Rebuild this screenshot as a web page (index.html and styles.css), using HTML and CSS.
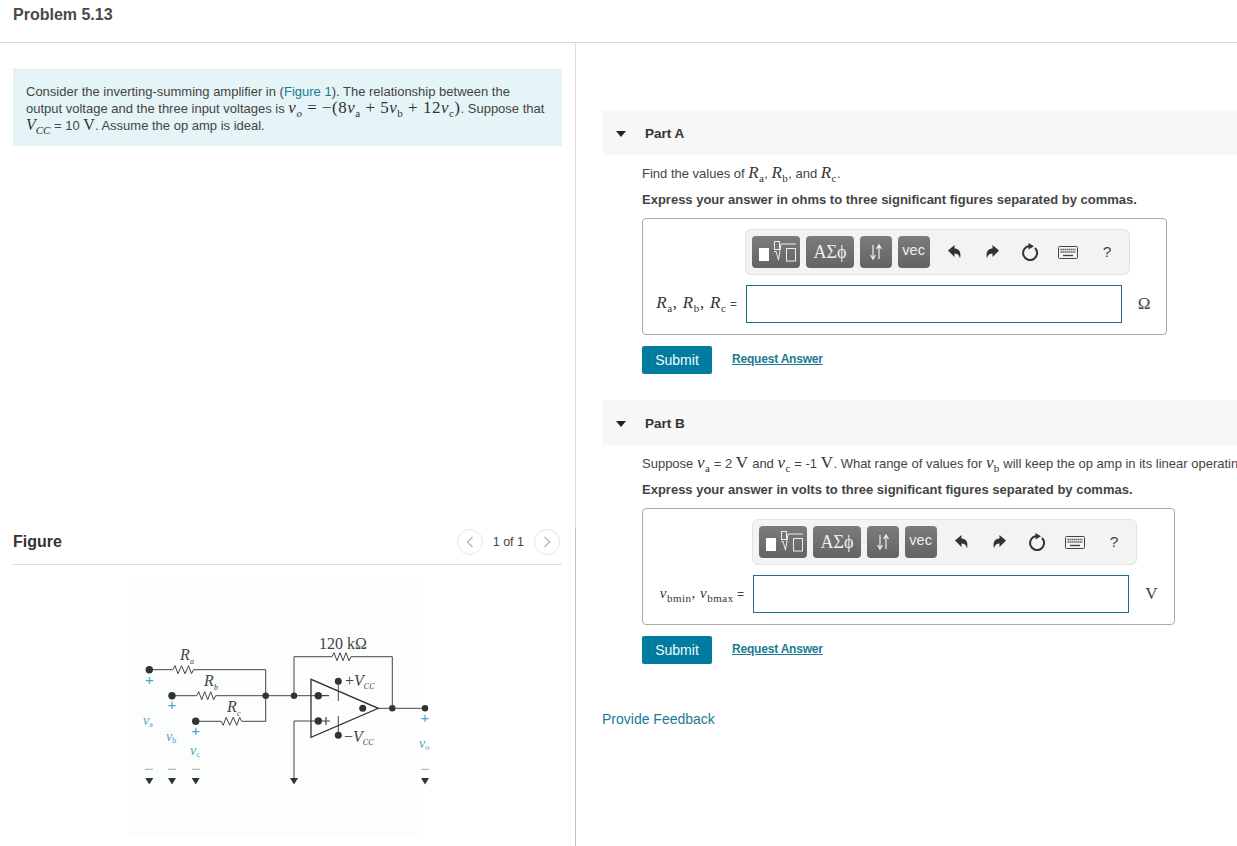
FILE: index.html
```html
<!DOCTYPE html>
<html lang="en">
<head>
    <meta charset="UTF-8">
    <title>Problem 5.13</title>
    <link rel="stylesheet" href="styles.css">
</head>
<body>
<svg class="defs" width="0" height="0">
    <symbol id="ic-templates" viewBox="0 0 48 32">
        <rect x="7" y="12" width="10" height="13" fill="#fff"/>
        <rect x="22.5" y="5.5" width="5" height="8" fill="none" stroke="#eee"/>
        <path d="M22 16l2-.8 2.5 9L29 8h14.7" fill="none" stroke="#eee"/>
        <rect x="34.5" y="12.5" width="9" height="12.5" fill="none" stroke="#eee"/>
    </symbol>
    <symbol id="ic-arrows" viewBox="0 0 16 18">
        <path d="M5 2v13M2.5 12L5 16l2.500-4M11 16V3M8.500 6L11 2l2.500 4" fill="none" stroke="#eee" stroke-width="1.200"/>
    </symbol>
    <symbol id="ic-undo" viewBox="0 0 16 16">
        <path d="M1 6.500L7.500 1v3.500c4.500 0 7 3.500 5.500 10-.7-3.500-2.500-5-5.500-5V13z" fill="#333"/>
    </symbol>
    <symbol id="ic-reset" viewBox="0 0 18 18">
        <path d="M14 5A7 7 0 1 1 8 3.100" fill="none" stroke="#333" stroke-width="2"/>
        <path d="M7.500 0l5.500 3.300-5.500 3.200z" fill="#333"/>
    </symbol>
    <symbol id="ic-keyboard" viewBox="0 0 20 13">
        <rect x=".5" y=".5" width="19" height="12" rx="1" fill="#f4f4f4" stroke="#444"/>
        <path d="M2.500 3.500h15M2.500 6h15" stroke="#444" stroke-width="1.400" stroke-dasharray="1.300 .7"/>
        <path d="M5 9.500h10" stroke="#444" stroke-width="1.400"/>
    </symbol>
</svg>

<header class="page-title">Problem 5.13</header>

<div class="main">
    <div class="left">
        <div class="statement">
            <div class="note">
                Consider the inverting-summing amplifier in (<a class="link" href="#">Figure 1</a>). The relationship between the<br>
                output voltage and the three input voltages is <span class="m eq"><i>v<sub>o</sub></i> = &minus;(8<i>v</i><sub>a</sub> + 5<i>v</i><sub>b</sub> + 12<i>v</i><sub>c</sub>)</span>. Suppose that<br>
                <span class="m"><i>V<sub>CC</sub></i></span> = 10 <span class="m">V</span>. Assume the op amp is ideal.
            </div>
        </div>

        <div class="figure">
            <div class="figure-head">
                <h2>Figure</h2>
                <div class="pager">
                    <span class="pager-btn">
                        <svg width="8" height="12" viewBox="0 0 8 12"><path d="M6.500 1L1.500 6l5 5" fill="none" stroke="#bbb" stroke-width="1.500"/></svg>
                    </span>
                    <span>1 of 1</span>
                    <span class="pager-btn">
                        <svg width="8" height="12" viewBox="0 0 8 12"><path d="M1.500 1l5 5-5 5" fill="none" stroke="#bbb" stroke-width="1.500"/></svg>
                    </span>
                </div>
            </div>
            <svg class="circuit" width="304" height="260" viewBox="128 575 304 260">
                <rect x="128" y="575" width="290" height="260" fill="#fcfdfd"/>
                <g fill="none" stroke="#444" stroke-width="1">
                    <path d="M149 668.700H173l2-4 3 8 3.500-8 3.500 8 3.500-8 3 8 2-4H265.700V720.300H241.700l-2-4-3 8-3.500-8-3.500 8-3.500-8-3 8-2-4H196"/>
                    <path d="M172 694.700H196.700l2-4 3 8 3-8 3 8 3-8 3 8 2-4H318"/>
                    <path d="M294 694.700V655.700H332l2-4 3 8 3-8 3 8 3-8 3 8 2-4H392.300V707.300"/>
                    <path d="M378 707.300H425"/>
                    <path d="M318 720H294V777"/>
                    <path d="M338.300 680V700M338.300 715V734"/>
                </g>
                <path d="M311 678.300V736.300L378.300 707.300Z" fill="none" stroke="#333" stroke-width="1.300"/>
                <g fill="#333">
                    <circle cx="149.300" cy="668.700" r="3.700"/>
                    <circle cx="172" cy="694.700" r="3.700"/>
                    <circle cx="195.700" cy="720.300" r="3.700"/>
                    <circle cx="265.700" cy="694.700" r="3.200"/>
                    <circle cx="294" cy="694.700" r="3.200"/>
                    <circle cx="318.300" cy="694.700" r="3.700"/>
                    <circle cx="318.300" cy="720" r="3.700"/>
                    <circle cx="338.300" cy="680.300" r="3.500"/>
                    <circle cx="338.300" cy="734.300" r="3.500"/>
                    <circle cx="362.700" cy="707.300" r="3.500"/>
                    <circle cx="392.300" cy="707.300" r="3.200"/>
                    <circle cx="425" cy="707.300" r="3.200"/>
                    <path d="M145.300 777h8l-4 6.500zM168 777h8l-4 6.500zM191.700 777h8l-4 6.500zM290 777h8l-4 6.500zM421 777h8l-4 6.500z"/>
                </g>
                <path d="M145 768.300h8M168 768.300h8M191.700 768.300h8M421 768.300h8" stroke="#7fb6c9" stroke-width="1"/>
                <path d="M321 694.700h8M322 720h8M326 716v8" stroke="#444" stroke-width="1.200"/>
                <text class="c-plain" x="343" y="648" text-anchor="middle">120 kΩ</text>
                <text class="c-it" x="180" y="659">R</text>
                <text class="c-it-s" x="190" y="663">a</text>
                <text class="c-it" x="204" y="685">R</text>
                <text class="c-it-s" x="214" y="689">b</text>
                <text class="c-it" x="227" y="711">R</text>
                <text class="c-it-s" x="237" y="715">c</text>
                <text class="c-plain" x="345" y="685">+<tspan class="c-it">V</tspan><tspan class="c-it-s" dy="3">CC</tspan></text>
                <text class="c-plain" x="344" y="741">&minus;<tspan class="c-it">V</tspan><tspan class="c-it-s" dy="3">CC</tspan></text>
                <g class="c-blue">
                    <text x="149.300" y="684" text-anchor="middle">+</text>
                    <text x="172" y="709" text-anchor="middle">+</text>
                    <text x="195.700" y="735" text-anchor="middle">+</text>
                    <text x="425" y="722" text-anchor="middle">+</text>
                </g>
                <g class="c-volt">
                    <text x="143" y="724"><tspan font-style="italic">v</tspan><tspan dy="2" font-size="8">a</tspan></text>
                    <text x="166" y="740"><tspan font-style="italic">v</tspan><tspan dy="2" font-size="8">b</tspan></text>
                    <text x="190" y="754"><tspan font-style="italic">v</tspan><tspan dy="2" font-size="8">c</tspan></text>
                    <text x="419" y="747"><tspan font-style="italic">v</tspan><tspan dy="2" font-size="8" font-style="italic">o</tspan></text>
                </g>
            </svg>
        </div>
    </div>

    <div class="right">
        <section class="part">
            <div class="part-head"><span class="caret"></span>Part A</div>
            <div class="part-body">
                <p class="prompt">Find the values of <span class="m"><i>R</i><sub>a</sub></span>, <span class="m"><i>R</i><sub>b</sub></span>, and <span class="m"><i>R</i><sub>c</sub></span>.</p>
                <p class="instr">Express your answer in ohms to three significant figures separated by commas.</p>
                <div class="answer">
                    <div class="toolbar">
                        <span class="tb tb-wide"><svg width="48" height="32"><use href="#ic-templates"/></svg></span>
                        <span class="tb tb-wide tb-serif">ΑΣϕ</span>
                        <span class="tb tb-small"><svg width="16" height="18"><use href="#ic-arrows"/></svg></span>
                        <span class="tb tb-small tb-vec">vec</span>
                        <span class="tool"><svg width="16" height="16"><use href="#ic-undo"/></svg></span>
                        <span class="tool"><svg class="flip" width="16" height="16"><use href="#ic-undo"/></svg></span>
                        <span class="tool"><svg width="18" height="18"><use href="#ic-reset"/></svg></span>
                        <span class="tool"><svg width="20" height="13"><use href="#ic-keyboard"/></svg></span>
                        <span class="tool tool-help">?</span>
                    </div>
                    <div class="answer-row">
                        <span class="answer-label"><span class="m"><i>R</i><sub>a</sub>, <i>R</i><sub>b</sub>, <i>R</i><sub>c</sub></span> =</span>
                        <span class="answer-input"></span>
                        <span class="unit">Ω</span>
                    </div>
                </div>
                <div class="actions">
                    <button class="submit">Submit</button>
                    <a class="request" href="#">Request Answer</a>
                </div>
            </div>
        </section>

        <section class="part part-b">
            <div class="part-head"><span class="caret"></span>Part B</div>
            <div class="part-body">
                <p class="prompt">Suppose <span class="m"><i>v</i><sub>a</sub></span> = 2 <span class="m">V</span> and <span class="m"><i>v</i><sub>c</sub></span> = -1 <span class="m">V</span>. What range of values for <span class="m"><i>v</i><sub>b</sub></span> will keep the op amp in its linear operating region?</p>
                <p class="instr">Express your answer in volts to three significant figures separated by commas.</p>
                <div class="answer answer-b">
                    <div class="toolbar">
                        <span class="tb tb-wide"><svg width="48" height="32"><use href="#ic-templates"/></svg></span>
                        <span class="tb tb-wide tb-serif">ΑΣϕ</span>
                        <span class="tb tb-small"><svg width="16" height="18"><use href="#ic-arrows"/></svg></span>
                        <span class="tb tb-small tb-vec">vec</span>
                        <span class="tool"><svg width="16" height="16"><use href="#ic-undo"/></svg></span>
                        <span class="tool"><svg class="flip" width="16" height="16"><use href="#ic-undo"/></svg></span>
                        <span class="tool"><svg width="18" height="18"><use href="#ic-reset"/></svg></span>
                        <span class="tool"><svg width="20" height="13"><use href="#ic-keyboard"/></svg></span>
                        <span class="tool tool-help">?</span>
                    </div>
                    <div class="answer-row">
                        <span class="answer-label answer-label-small"><span class="m"><i>v</i><sub>bmin</sub>, <i>v</i><sub>bmax</sub></span> =</span>
                        <span class="answer-input"></span>
                        <span class="unit">V</span>
                    </div>
                </div>
                <div class="actions">
                    <button class="submit">Submit</button>
                    <a class="request" href="#">Request Answer</a>
                </div>
            </div>
        </section>

        <a class="feedback" href="#">Provide Feedback</a>
    </div>
</div>
</body>
</html>
```

FILE: styles.css
```css
body {
    margin: 0;
    height: 846px;
    overflow: hidden;
    background-color: #fff;
    color: #444;
    font-family: "Liberation Sans", Arial, sans-serif;
    font-size: 13px;
}
.defs { position: absolute; }

.page-title {
    height: 42px;
    padding-left: 13px;
    line-height: 29px;
    font-size: 16px;
    font-weight: bold;
    color: #484848;
    border-bottom: 1px solid #d9d9d9;
}

.main { display: flex; height: 803px; }

.left { width: 576px; flex: none; display: flex; flex-direction: column; }
.statement {
    flex: none;
    height: 458px;
    padding: 26px 13px 0 13px;
    border-right: 1px solid #dcdcdc;
}
.note {
    width: 523px;
    height: 60px;
    padding: 13px 13px 3px 13px;
    background-color: #e5f4f6;
    border-top: 1px solid #e3e6e6;
    line-height: 17px;
    white-space: nowrap;
}
.link { color: #1a7a94; text-decoration: none; }

.m { font-family: "Liberation Serif", serif; font-size: 17px; color: #333; line-height: 0; letter-spacing: .4px; }
.m sub { font-size: 11px; line-height: 0; }
.note .m { font-size: 16px; letter-spacing: 0; }
.note .eq { font-size: 17px; letter-spacing: .5px; }

.figure {
    flex: 1;
    padding: 0 13px;
    border-right: 1px solid #b9c5d6;
}
.figure-head {
    height: 29px;
    padding-bottom: 8px;
    width: 549px;
    display: flex;
    justify-content: space-between;
    align-items: center;
    border-bottom: 1px solid #dcdcdc;
}
.figure-head h2 { margin: 0; font-size: 16px; color: #333; }
.pager { display: flex; align-items: center; gap: 10px; padding-right: 2px; font-size: 12.5px; color: #444; }
.pager-btn {
    width: 26px;
    height: 26px;
    box-sizing: border-box;
    border: 1px solid #e6e6e6;
    border-radius: 50%;
    display: flex;
    align-items: center;
    justify-content: center;
}

.circuit { display: block; margin: 11px 0 0 115px; }
.c-plain { font: 16px "Liberation Serif", serif; fill: #444; }
.c-it { font: italic 16px "Liberation Serif", serif; fill: #444; }
.c-it-s { font: italic 8px "Liberation Serif", serif; fill: #444; }
.c-blue text { font: 15px "Liberation Sans", sans-serif; fill: #3fa9c9; }
.c-volt text { font-family: "Liberation Serif", serif; font-size: 14px; fill: #4aa6c3; }

.right { flex: 1; min-width: 0; overflow: hidden; padding-left: 26px; }

.part { margin-top: 67px; }
.part-b { margin-top: 26px; }
.part-head {
    height: 43px;
    padding-top: 2px;
    background-color: #f7f7f7;
    font-weight: bold;
    font-size: 13.500px;
    color: #333;
    display: flex;
    align-items: center;
}
.caret {
    width: 0;
    height: 0;
    margin: 0 19px 0 14px;
    border-left: 5.500px solid transparent;
    border-right: 5.500px solid transparent;
    border-top: 6px solid #222;
}
.part-body { padding-left: 40px; }
.prompt { margin: 10px 0 0 0; line-height: 17px; white-space: nowrap; }
.instr { margin: 9px 0 0 0; line-height: 17px; font-weight: bold; white-space: nowrap; }

.answer {
    width: 523px;
    height: 115px;
    margin-top: 10px;
    border: 1px solid #aaa;
    border-radius: 4px;
    display: flex;
    flex-direction: column;
}
.answer-b { width: 531px; }

.toolbar {
    align-self: flex-end;
    width: 385px;
    height: 46px;
    box-sizing: border-box;
    margin: 10px 36px 0 0;
    padding: 0 6px;
    display: flex;
    align-items: center;
    gap: 6px;
    background-color: #f3f3f3;
    border: 1px solid #e3e3e3;
    border-radius: 6px;
}
.answer-b .toolbar { margin-right: 37px; }
.tb {
    height: 32px;
    border-radius: 4px;
    background: linear-gradient(#7c7c7c, #636363);
    color: #eee;
    display: flex;
    align-items: center;
    justify-content: center;
}
.tb-wide { width: 48px; }
.tb-small { width: 32px; }
.tb-serif { font: 18px "Liberation Serif", serif; }
.tb-vec { font-size: 14.500px; padding-bottom: 5px; box-sizing: border-box; }
.tool { width: 32px; display: flex; justify-content: center; align-items: center; color: #444; }
.tool:nth-child(5) { margin-left: 3px; }
.tool-help { font-size: 15.500px; margin-left: 1px; }
.flip { transform: scaleX(-1); }

.answer-row { display: flex; align-items: center; margin-top: 10px; }
.answer-label { width: 103px; box-sizing: border-box; padding-right: 9px; text-align: right; white-space: nowrap; font-size: 12px; }
.answer-label .m { font-size: 17px; letter-spacing: .7px; }
.answer-label-small { width: 110px; }
.answer-label-small .m { font-size: 15px; letter-spacing: .5px; }
.answer-input {
    width: 376px;
    height: 38px;
    box-sizing: border-box;
    border: 1px solid #1f6f8b;
    background-color: #fff;
}
.unit { flex: 1; text-align: center; font: 17px "Liberation Serif", serif; color: #444; }

.actions { display: flex; align-items: center; gap: 20px; margin-top: 11px; }
.submit {
    width: 70px;
    height: 28px;
    padding: 0;
    border: none;
    border-radius: 2px;
    background-color: #007c9e;
    color: #f2fbfd;
    font-family: "Liberation Sans", Arial, sans-serif;
    font-size: 14px;
}
.request { color: #1a7a94; font-size: 12px; letter-spacing: -.2px; font-weight: bold; margin-bottom: 3px; }

.feedback { display: block; margin-top: 47px; color: #1a7a94; font-size: 14px; text-decoration: none; }
```
